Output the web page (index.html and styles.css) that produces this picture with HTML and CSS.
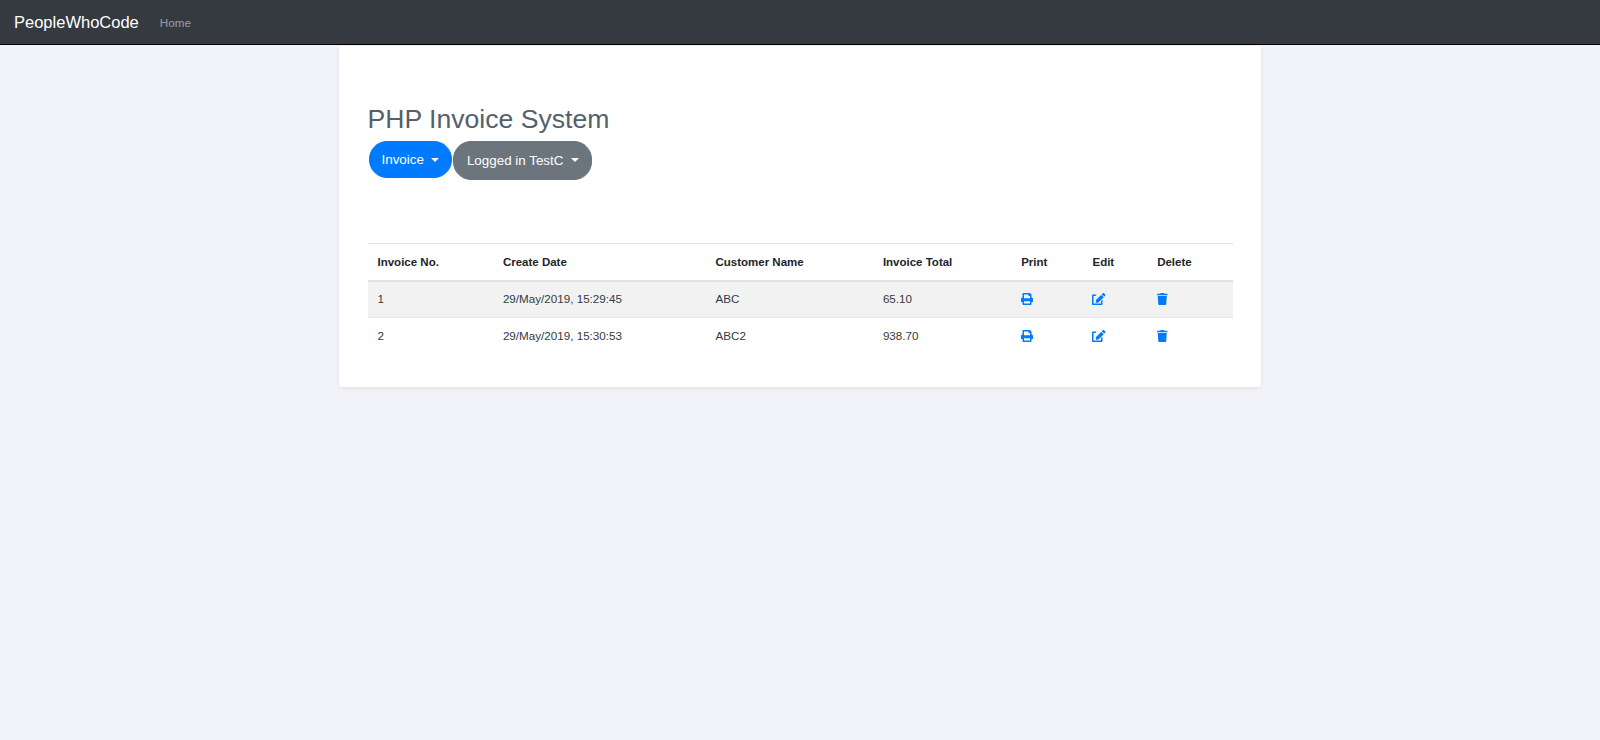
FILE: index.html
```html
<!DOCTYPE html>
<html lang="en">
<head>
<meta charset="utf-8">
<title>PHP Invoice System</title>
<link rel="stylesheet" href="styles.css">
</head>
<body>
<nav class="navbar">
  <a class="brand" href="#">PeopleWhoCode</a>
  <a class="nav-link" href="#">Home</a>
</nav>
<main class="card">
  <h2 class="title">PHP Invoice System</h2>
  <div class="actions">
    <button class="btn btn-primary">Invoice<span class="caret"></span></button>
    <button class="btn btn-secondary">Logged in TestC<span class="caret"></span></button>
  </div>
  <table class="invoices">
    <colgroup>
      <col class="c1"><col class="c2"><col class="c3"><col class="c4"><col class="c5"><col class="c6"><col class="c7">
    </colgroup>
    <thead>
      <tr><th>Invoice No.</th><th>Create Date</th><th>Customer Name</th><th>Invoice Total</th><th>Print</th><th>Edit</th><th>Delete</th></tr>
    </thead>
    <tbody>
      <tr class="odd">
        <td>1</td><td>29/May/2019, 15:29:45</td><td>ABC</td><td>65.10</td>
        <td><svg class="icon ic-print" viewBox="0 0 512 512"><path d="M448 192V77.25c0-8.49-3.37-16.62-9.37-22.63L393.37 9.37c-6-6-14.14-9.37-22.63-9.37H96C78.33 0 64 14.33 64 32v160c-35.35 0-64 28.65-64 64v112c0 8.84 7.16 16 16 16h48v96c0 17.67 14.33 32 32 32h320c17.67 0 32-14.33 32-32v-96h48c8.84 0 16-7.16 16-16V256c0-35.35-28.65-64-64-64zm-64 256H128v-96h256v96zm0-224H128V64h192v48c0 8.84 7.16 16 16 16h48v96z"/></svg></td>
        <td><svg class="icon ic-edit" viewBox="0 0 576 512"><path d="M402.6 83.2l90.2 90.2c3.8 3.8 3.8 10 0 13.8L274.4 405.6l-92.8 10.3c-12.4 1.4-22.9-9.1-21.5-21.5l10.3-92.8L388.8 83.2c3.8-3.8 10-3.8 13.8 0zm162-22.9l-48.8-48.8c-15.2-15.2-39.9-15.2-55.2 0l-35.4 35.4c-3.8 3.8-3.8 10 0 13.8l90.2 90.2c3.8 3.8 10 3.8 13.8 0l35.4-35.4c15.2-15.3 15.2-40 0-55.2zM384 346.2V448H64V128h73.1c3.2 0 6.2-1.3 8.5-3.5l40-40c7.6-7.6 2.2-20.5-8.5-20.5H48C21.5 64 0 85.5 0 112v352c0 26.5 21.5 48 48 48h352c26.5 0 48-21.5 48-48V306.2c0-10.7-12.9-16-20.5-8.5l-40 40c-2.2 2.3-3.5 5.3-3.5 8.5z"/></svg></td>
        <td><svg class="icon ic-trash" viewBox="0 0 448 512"><path d="M432 32H312l-9.4-18.7A24 24 0 0 0 281.1 0H166.8a23.72 23.72 0 0 0-21.4 13.3L136 32H16A16 16 0 0 0 0 48v32a16 16 0 0 0 16 16h416a16 16 0 0 0 16-16V48a16 16 0 0 0-16-16zM53.2 467a48 48 0 0 0 47.9 45h245.8a48 48 0 0 0 47.9-45L416 128H32z"/></svg></td>
      </tr>
      <tr>
        <td>2</td><td>29/May/2019, 15:30:53</td><td>ABC2</td><td>938.70</td>
        <td><svg class="icon ic-print" viewBox="0 0 512 512"><path d="M448 192V77.25c0-8.49-3.37-16.62-9.37-22.63L393.37 9.37c-6-6-14.14-9.37-22.63-9.37H96C78.33 0 64 14.33 64 32v160c-35.35 0-64 28.65-64 64v112c0 8.84 7.16 16 16 16h48v96c0 17.67 14.33 32 32 32h320c17.67 0 32-14.33 32-32v-96h48c8.84 0 16-7.16 16-16V256c0-35.35-28.65-64-64-64zm-64 256H128v-96h256v96zm0-224H128V64h192v48c0 8.84 7.16 16 16 16h48v96z"/></svg></td>
        <td><svg class="icon ic-edit" viewBox="0 0 576 512"><path d="M402.6 83.2l90.2 90.2c3.8 3.8 3.8 10 0 13.8L274.4 405.6l-92.8 10.3c-12.4 1.4-22.9-9.1-21.5-21.5l10.3-92.8L388.8 83.2c3.8-3.8 10-3.8 13.8 0zm162-22.9l-48.8-48.8c-15.2-15.2-39.9-15.2-55.2 0l-35.4 35.4c-3.8 3.8-3.8 10 0 13.8l90.2 90.2c3.8 3.8 10 3.8 13.8 0l35.4-35.4c15.2-15.3 15.2-40 0-55.2zM384 346.2V448H64V128h73.1c3.2 0 6.2-1.3 8.5-3.5l40-40c7.6-7.6 2.2-20.5-8.5-20.5H48C21.5 64 0 85.5 0 112v352c0 26.5 21.5 48 48 48h352c26.5 0 48-21.5 48-48V306.2c0-10.7-12.9-16-20.5-8.5l-40 40c-2.2 2.3-3.5 5.3-3.5 8.5z"/></svg></td>
        <td><svg class="icon ic-trash" viewBox="0 0 448 512"><path d="M432 32H312l-9.4-18.7A24 24 0 0 0 281.1 0H166.8a23.72 23.72 0 0 0-21.4 13.3L136 32H16A16 16 0 0 0 0 48v32a16 16 0 0 0 16 16h416a16 16 0 0 0 16-16V48a16 16 0 0 0-16-16zM53.2 467a48 48 0 0 0 47.9 45h245.8a48 48 0 0 0 47.9-45L416 128H32z"/></svg></td>
      </tr>
    </tbody>
  </table>
</main>
</body>
</html>
```
FILE: styles.css
```css
* { box-sizing: border-box; }
html, body { height: 100%; }
body {
  margin: 0;
  background: #f1f3f8;
  font-family: "Liberation Sans", Arial, sans-serif;
  font-size: 12px;
  color: #212529;
  overflow: hidden;
}
a { text-decoration: none; }

.navbar {
  display: flex;
  align-items: center;
  height: 45px;
  padding: 0 14px;
  background: #343a40;
  border-bottom: 1px solid #000;
}
.brand { color: #fff; font-size: 16.5px; margin-right: 21px; }
.nav-link { color: rgba(255,255,255,.5); font-size: 11.7px; }

.card {
  width: 922px;
  height: 341px;
  margin: 1px auto 0;
  padding: 58px 28.5px 0;
  background: #fff;
  border-radius: 2px;
  box-shadow: 0 1px 4px rgba(0,0,0,.08);
}
.title {
  margin: 0;
  font-size: 26.6px;
  line-height: 30px;
  font-weight: 400;
  color: #55606b;
}
.actions {
  display: flex;
  align-items: flex-start;
  gap: 1px;
  height: 39px;
  margin-top: 7px;
  margin-left: 1px;
}
.btn {
  display: inline-flex;
  align-items: center;
  border-radius: 18px;
  font-family: inherit;
  font-size: 13.4px;
  color: #fff;
}
.btn-primary { height: 37px; padding: 0 12px; background: #007bff; border: 1px solid #007bff; }
.btn-secondary { height: 38.5px; padding: 0 12.7px; background: #6c757d; border: 1px solid #6c757d; }
.caret {
  width: 0;
  height: 0;
  margin-left: 7.3px;
  border-top: 4px solid #fff;
  border-left: 4px solid transparent;
  border-right: 4px solid transparent;
}

.invoices {
  width: 865px;
  margin-top: 63px;
  border-collapse: collapse;
  table-layout: fixed;
  font-size: 11.65px;
}
.c1 { width: 125.4px; } .c2 { width: 212.6px; } .c3 { width: 167.4px; } .c4 { width: 138.3px; }
.c5 { width: 71.3px; } .c6 { width: 64.7px; } .c7 { width: 85.3px; }
.invoices th, .invoices td {
  padding: 0 10px;
  text-align: left;
  vertical-align: middle;
}
.invoices th {
  height: 37px;
  font-size: 11.5px;
  font-weight: 700;
  color: #212529;
  border-top: 1px solid #dee2e6;
  border-bottom: 2px solid #dee2e6;
}
.invoices td {
  height: 37px;
  padding-bottom: 1px;
  color: #343a40;
  border-top: 1px solid #e6e8eb;
}
.invoices tbody tr:first-child td { border-top: 0; }
.odd td { background: #f2f2f2; }
.icon { display: block; height: 12px; fill: #007bff; }
.ic-print { width: 12px; }
.ic-edit { width: 13.5px; }
.ic-trash { width: 10.5px; }
```
